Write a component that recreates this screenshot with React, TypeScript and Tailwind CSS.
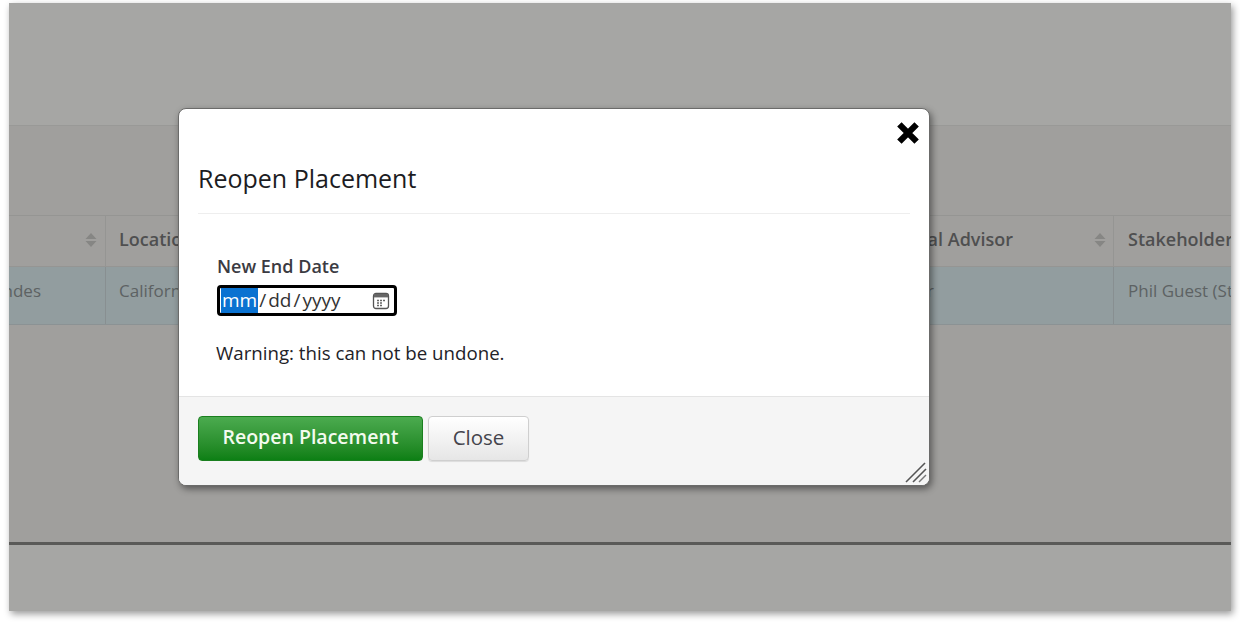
const font = { fontFamily: "'Open Sans', 'Noto Sans', sans-serif" };

function SortIcon() {
  return (
    <svg width="12" height="16" viewBox="0 0 12 16" className="shrink-0" aria-hidden>
      <path d="M6 1 L11.5 7 H0.5 Z" fill="#868684" />
      <path d="M6 15 L11.5 9 H0.5 Z" fill="#868684" />
    </svg>
  );
}

function HeaderCell({ label, sort, className }: { label: string; sort?: boolean; className?: string }) {
  return (
    <div className={`flex items-center overflow-hidden border-r border-[#959593] pb-[3px] text-[18px] font-semibold whitespace-nowrap text-[#4f4f50] ${className ?? ""}`}>
      <span>{label}</span>
      {sort && <SortIcon />}
    </div>
  );
}

function BodyCell({ label, className }: { label: string; className?: string }) {
  return (
    <div className={`flex items-center overflow-hidden border-r border-[#888f91] pb-[10px] text-[17px] whitespace-nowrap text-[#5d6263] ${className ?? ""}`}>
      {label}
    </div>
  );
}

function CalendarIcon() {
  return (
    <svg width="18" height="18" viewBox="0 0 18 18" aria-hidden>
      <rect x="1.5" y="1.5" width="15" height="15" rx="2.5" fill="none" stroke="#555" strokeWidth="1.3" />
      <rect x="2" y="2" width="14" height="3.4" fill="#666" />
      <path d="M5 8.5h2M8 8.5h2M11 8.5h2M5 11h2M8 11h2M5 13.5h2M8 13.5h2" stroke="#666" strokeWidth="1.3" />
    </svg>
  );
}

function ResizeGrip() {
  return (
    <svg width="24" height="24" viewBox="0 0 24 24" aria-hidden>
      <path d="M1 21 L20 2" stroke="#555" strokeWidth="1.6" />
      <path d="M8 21 L21 8" stroke="#555" strokeWidth="1.6" />
      <path d="M14 21 L21 14" stroke="#777" strokeWidth="1.4" />
    </svg>
  );
}

function Modal() {
  return (
    <div className="absolute top-[105px] left-[169px] flex h-[378px] w-[752px] flex-col overflow-hidden rounded-[8px] border border-[#6b6b6a] bg-white shadow-[2px_3px_7px_rgba(0,0,0,0.45)]">
      <div className="relative mx-[19px] h-[105px] border-b border-[#eeeeee]">
        <h2 className="absolute top-[52px] left-0 text-[25px] leading-[34px] font-normal text-[#1c1c22]">Reopen Placement</h2>
        <svg width="22" height="22" viewBox="0 0 24 24" className="absolute top-[13px] right-[-9px]" aria-hidden>
          <path d="M5 5 L19 19 M19 5 L5 19" stroke="#000" strokeWidth="6.8" strokeLinecap="square" strokeLinejoin="round" />
        </svg>
      </div>
      <div className="flex-1 pt-[41px] pr-[37px] pl-[37px]">
        <label className="ml-px block text-[18px] leading-[22px] font-semibold text-[#3b3b42]">New End Date</label>
        <div className="mt-[8px] ml-px flex h-[31px] w-[180px] items-center rounded-[4px] border-[3px] border-black pr-[4px] pl-[1px] text-[19px] text-[#333]">
          <span className="bg-[#0a72d1] px-px leading-[25px] text-white">mm</span>
          <span className="ml-[1px]">/</span>
          <span className="ml-[2px]">dd</span>
          <span className="ml-[2px]">/</span>
          <span className="ml-[2px]">yyyy</span>
          <span className="ml-auto flex"><CalendarIcon /></span>
        </div>
        <p className="mt-[25px] text-[18.7px] leading-[24px] text-[#222228]">Warning: this can not be undone.</p>
      </div>
      <div className="relative flex h-[89px] items-start gap-[5px] border-t border-[#e4e4e4] bg-[#f5f5f5] px-[19px] pt-[19px]">
        <button className="h-[45px] w-[225px] rounded-[4px] border border-[#1a7f1f] bg-gradient-to-b from-[#4bab4f] to-[#0c7f14] pb-[3px] text-[19.5px] font-semibold text-[#f4fbef]">
          Reopen Placement
        </button>
        <button className="h-[45px] w-[101px] rounded-[4px] border border-[#cfcfcf] bg-gradient-to-b from-white to-[#e6e6e6] pb-[3px] text-[20.5px] text-[#44444c] shadow-[0_1px_1px_rgba(0,0,0,0.1)]">
          Close
        </button>
        <span className="absolute right-0 bottom-0 flex"><ResizeGrip /></span>
      </div>
    </div>
  );
}

export default function App() {
  return (
    <div className="h-[623px] w-[1240px] overflow-hidden bg-white pt-[3px] pr-[9px] pb-[12px] pl-[9px]" style={font}>
      <div className="relative flex h-[608px] flex-col overflow-hidden bg-[#a09f9d] shadow-[2px_3px_7px_rgba(0,0,0,0.4)]">
        <div className="h-[123px] border-b border-[#999997] bg-[#a6a6a4]" />
        <div className="h-[89px]" />
        <div className="grid h-[52px] grid-cols-[97px_1fr_199px_117px] border-y border-[#959593]">
          <HeaderCell label="" sort className="justify-between pr-[8px]" />
          <HeaderCell label="Location" className="justify-between pl-[13px]" />
          <HeaderCell label="Legal Advisor" sort className="justify-end gap-[81px] pr-[7px]" />
          <HeaderCell label="Stakeholders" className="justify-between border-r-0 pl-[14px]" />
        </div>
        <div className="grid h-[58px] grid-cols-[97px_1fr_199px_117px] border-b border-[#8b9294] bg-[#929d9f]">
          <BodyCell label="Fernandes" className="justify-end pr-[64px]" />
          <BodyCell label="California" className="pl-[13px]" />
          <BodyCell label="Partner" className="justify-end pr-[179px]" />
          <BodyCell label="Phil Guest (Stakeholder)" className="border-r-0 pl-[14px]" />
        </div>
        <div className="flex-1 border-b-[3px] border-[#5a5a58]" />
        <div className="h-[66px] bg-[#a6a6a4]" />
        <Modal />
      </div>
    </div>
  );
}
